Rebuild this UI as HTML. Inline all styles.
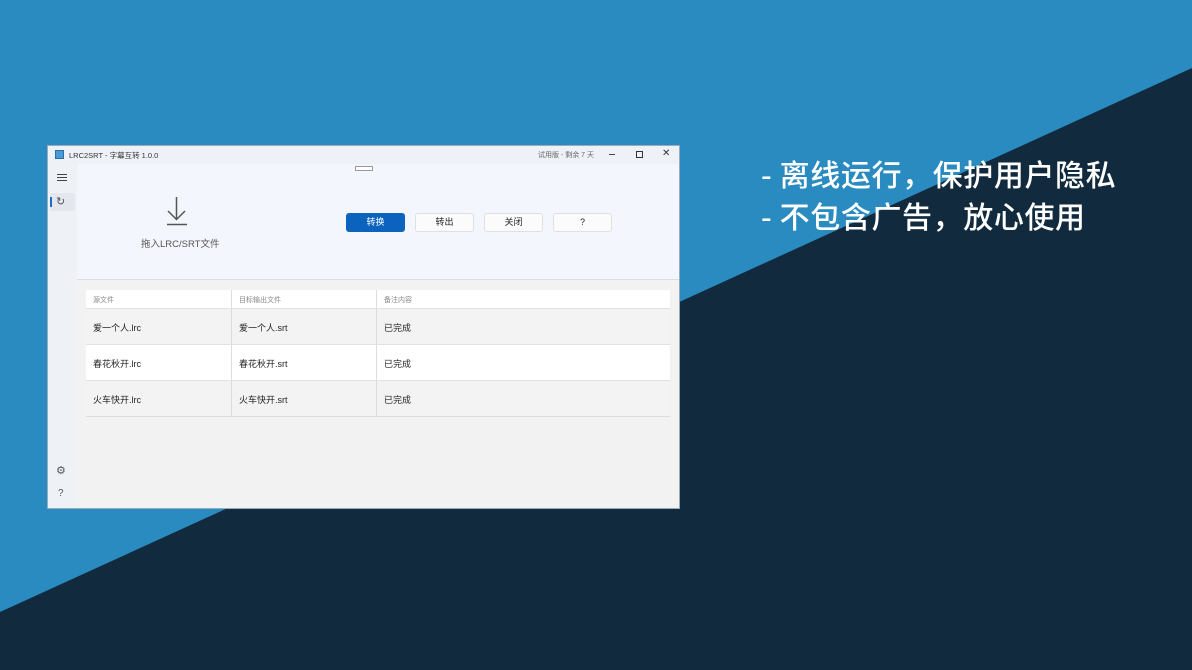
<!DOCTYPE html>
<html><head><meta charset="utf-8"><style>
*{margin:0;padding:0;box-sizing:border-box}
body{width:1192px;height:670px;overflow:hidden;background:#2a8bc0;font-family:"Liberation Sans","Noto Sans CJK SC",sans-serif;position:relative}
.abs{position:absolute}
.win{left:47px;top:145px;width:633px;height:364px;background:#f2f2f2;border:1px solid #9ab;}
.btn{position:absolute;top:213px;height:19px;width:59px;background:#fbfbfb;border:1px solid #e0e0e0;border-radius:3px;font-size:9px;color:#222;text-align:center;line-height:17px}
.cell{position:absolute;font-size:9px;color:#222}
.hd{font-size:7px;color:#888}
.big{color:#fff;font-size:30px;left:761px;font-family:"Noto Sans CJK SC",sans-serif;font-weight:500;letter-spacing:0.6px}
</style></head><body>
<svg class="abs" style="left:0;top:0" width="1192" height="670"><polygon points="1192,68 1192,670 0,670 0,612" fill="#112a3d"/></svg>
<div class="abs big" style="top:151px">- 离线运行，保护用户隐私</div>
<div class="abs big" style="top:193px">- 不包含广告，放心使用</div>
<div class="abs win"></div>
<div class="abs" style="left:48px;top:146px;width:631px;height:18px;background:#eef2f7"></div>
<div class="abs" style="left:55px;top:150px;width:9px;height:9px;background:#4a9ad6;border:1px solid #2a6fa8"></div>
<div class="abs" style="left:69px;top:150px;font-size:7.5px;color:#333">LRC2SRT - 字幕互转 1.0.0</div>
<div class="abs" style="left:538px;top:150px;font-size:7px;color:#666">试用版 - 剩余 7 天</div>
<div class="abs" style="left:609px;top:154px;width:6px;height:1px;background:#444"></div>
<div class="abs" style="left:636px;top:151px;width:7px;height:7px;border:1px solid #333"></div>
<div class="abs" style="left:662px;top:148px;font-size:10px;color:#333">✕</div>
<div class="abs" style="left:48px;top:164px;width:29px;height:344px;background:#eef2f7"></div>
<div class="abs" style="left:57px;top:174px;width:10px;height:1px;background:#444;box-shadow:0 3px 0 #444,0 6px 0 #444"></div>
<div class="abs" style="left:50px;top:193px;width:25px;height:18px;background:#e4e8ee"></div>
<div class="abs" style="left:50px;top:197px;width:2px;height:10px;background:#1a6fc4"></div>
<div class="abs" style="left:56px;top:195px;font-size:11px;color:#555">↻</div>
<div class="abs" style="left:56px;top:464px;font-size:11px;color:#555">⚙</div>
<div class="abs" style="left:58px;top:488px;font-size:10px;color:#555">?</div>
<div class="abs" style="left:77px;top:164px;width:602px;height:116px;background:#f3f6fc;border-bottom:1px solid #ddd"></div>
<div class="abs" style="left:355px;top:166px;width:18px;height:5px;border:1px solid #999;background:#fff"></div>
<svg class="abs" style="left:164px;top:195px" width="26" height="32"><path d="M12.5 2V24M4 16l8.5 8.5L21 16M3 29.5h20" stroke="#555" stroke-width="1.5" fill="none"/></svg>
<div class="abs" style="left:141px;top:236px;font-size:9.5px;color:#555">拖入LRC/SRT文件</div>
<div class="btn" style="left:346px;background:#0b63bd;border-color:#0b63bd;color:#fff">转换</div>
<div class="btn" style="left:415px">转出</div>
<div class="btn" style="left:484px">关闭</div>
<div class="btn" style="left:553px">?</div>
<div class="abs" style="left:86px;top:290px;width:584px;height:18px;background:#fff"></div>
<div class="abs" style="left:86px;top:308px;width:584px;height:36px;background:#f3f3f3;border-top:1px solid #e2e2e2"></div>
<div class="abs" style="left:86px;top:344px;width:584px;height:36px;background:#fff;border-top:1px solid #e2e2e2"></div>
<div class="abs" style="left:86px;top:380px;width:584px;height:37px;background:#f3f3f3;border-top:1px solid #e2e2e2;border-bottom:1px solid #ddd"></div>
<div class="abs" style="left:231px;top:290px;width:1px;height:126px;background:#ddd"></div>
<div class="abs" style="left:376px;top:290px;width:1px;height:126px;background:#ddd"></div>
<div class="cell hd" style="left:93px;top:295px">源文件</div>
<div class="cell hd" style="left:239px;top:295px">目标输出文件</div>
<div class="cell hd" style="left:384px;top:295px">备注内容</div>
<div class="cell" style="left:93px;top:321px">爱一个人.lrc</div>
<div class="cell" style="left:239px;top:321px">爱一个人.srt</div>
<div class="cell" style="left:384px;top:321px">已完成</div>
<div class="cell" style="left:93px;top:357px">春花秋开.lrc</div>
<div class="cell" style="left:239px;top:357px">春花秋开.srt</div>
<div class="cell" style="left:384px;top:357px">已完成</div>
<div class="cell" style="left:93px;top:393px">火车快开.lrc</div>
<div class="cell" style="left:239px;top:393px">火车快开.srt</div>
<div class="cell" style="left:384px;top:393px">已完成</div>
</body></html>
